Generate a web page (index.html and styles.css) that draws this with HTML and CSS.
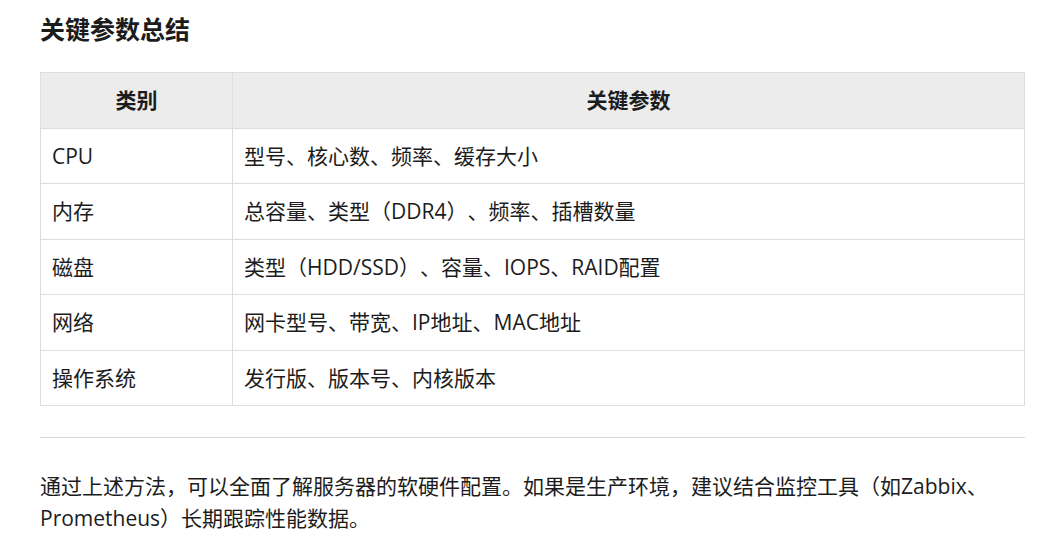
FILE: index.html
```html
<!DOCTYPE html>
<html lang="zh-CN">
<head>
<meta charset="utf-8">
<link rel="stylesheet" href="styles.css">
</head>
<body>
<main class="doc">
  <h3 class="title">关键参数总结</h3>
  <table class="params">
    <thead>
      <tr><th class="col-cat">类别</th><th>关键参数</th></tr>
    </thead>
    <tbody>
      <tr><td>CPU</td><td>型号、核心数、频率、缓存大小</td></tr>
      <tr><td>内存</td><td>总容量、类型（DDR4）、频率、插槽数量</td></tr>
      <tr><td>磁盘</td><td>类型（HDD/SSD）、容量、IOPS、RAID配置</td></tr>
      <tr><td>网络</td><td>网卡型号、带宽、IP地址、MAC地址</td></tr>
      <tr><td>操作系统</td><td>发行版、版本号、内核版本</td></tr>
    </tbody>
  </table>
  <hr class="sep">
  <p class="note">通过上述方法，可以全面了解服务器的软硬件配置。如果是生产环境，建议结合监控工具（如Zabbix、Prometheus）长期跟踪性能数据。</p>
</main>
</body>
</html>
```
FILE: styles.css
```css
html, body {
  margin: 0;
  padding: 0;
  background: #ffffff;
}
body {
  font-family: "Open Sans", "Noto Sans CJK SC", sans-serif;
  color: #1c1c1c;
  font-size: 21px;
  text-spacing-trim: space-all;
}
.doc {
  width: 985px;
  margin-left: 40px;
}
.title {
  font-size: 25px;
  font-weight: 700;
  line-height: 36px;
  margin: 11px 0 25px 0;
}
.params {
  width: 100%;
  border-collapse: collapse;
  line-height: 30.5px;
}
.params th, .params td {
  border: 1px solid #dddddd;
  padding: 12px 11px;
  text-align: left;
  font-weight: 400;
}
.params th {
  background: #ececec;
  font-weight: 700;
  text-align: center;
}
.params .col-cat {
  width: 169px;
}
.sep {
  border: 0;
  border-top: 1px solid #d9d9d9;
  margin: 31px 0 0 0;
  height: 0;
}
.note {
  margin: 33px 0 0 0;
  line-height: 31.5px;
}
```
